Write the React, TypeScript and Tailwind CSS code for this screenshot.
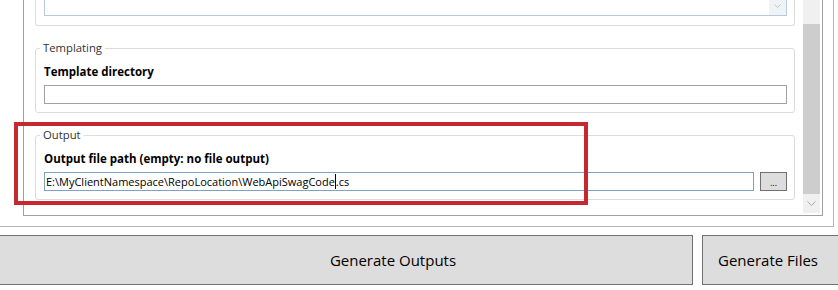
export default function App() {
  return (
    <div className="relative w-[838px] h-[290px] overflow-hidden bg-white text-black font-['Open_Sans','Noto_Sans',sans-serif]">
      {/* outer frame, left edge is off screen */}
      <div className="-ml-[10px] w-[844px] h-[227px] border-r border-b border-[#b4b4b4]">
        <div className="ml-[33px] w-[800px] h-[216px] flex border-l border-r border-b border-[#a0a0a0]">
          <div className="flex-1 pl-[11px] pr-[8px]">
            {/* previous group, scrolled so only its bottom shows */}
            <div className="border-x border-b border-[#dcdcdc] rounded-b-[3px] pl-[8px] pr-[7px] pb-[9px]">
              <div className="h-[16px] flex justify-end border-x border-b border-[#b9c9d9]">
                <div className="w-[17px] flex items-start justify-center bg-[#eef3f8] pt-[4px]">
                  <svg width="7" height="4" viewBox="0 0 7 4" fill="none" stroke="#c4c4c4" strokeWidth="1">
                    <path d="M0.5 0.5 L3.5 3.5 L6.5 0.5" />
                  </svg>
                </div>
              </div>
            </div>

            <fieldset className="mt-[14px] border border-[#dcdcdc] rounded-[3px] pl-[8px] pr-[7px] pt-[8px] pb-[8px]">
              <legend className="-ml-[4px] px-[3px] text-[11.3px] leading-[16px] text-[#333]">Templating</legend>
              <div className="text-[11.5px] leading-[16px] font-bold">Template directory</div>
              <div className="mt-[5px] h-[19px] border border-[#a0a0a0]" />
            </fieldset>

            <fieldset className="mt-[14px] border border-[#dcdcdc] rounded-[3px] pl-[8px] pr-[7px] pt-[8px] pb-[8px]">
              <legend className="-ml-[4px] px-[3px] text-[11.3px] leading-[16px] text-[#333]">Output</legend>
              <div className="text-[11.5px] leading-[16px] font-bold">Output file path (empty: no file output)</div>
              <div className="mt-[5px] flex gap-[6px]">
                <div className="flex-1 h-[19px] flex items-center border border-[#7ea2c2] pl-[1px] text-[11px] leading-[16px]">
                  <span>E:\MyClientNamespace\RepoLocation\WebApiSwagCode</span>
                  <span className="w-[1px] h-[15px] bg-black" />
                  <span>.cs</span>
                </div>
                <button className="w-[27px] h-[19px] flex items-end justify-center pb-[3px] bg-[#dddddd] border border-[#707070] text-[9px] leading-none">
                  ...
                </button>
              </div>
            </fieldset>
          </div>

          {/* vertical scrollbar */}
          <div className="w-[17px] h-[213px] mr-[2px] flex flex-col bg-[#f0f0f0]">
            <div className="h-[24px]" />
            <div className="h-[170px] bg-[#cdcdcd]" />
            <div className="flex-1 flex items-center justify-center">
              <svg width="9" height="5" viewBox="0 0 9 5" fill="none" stroke="#a6a6a6" strokeWidth="1">
                <path d="M0.5 0.5 L4.5 4.5 L8.5 0.5" />
              </svg>
            </div>
          </div>
        </div>
      </div>

      <div className="mt-[8px] flex gap-[9px]">
        <button className="-ml-[2px] w-[695px] h-[50px] shrink-0 flex items-center justify-center pl-[95px] bg-[#dddddd] border border-[#707070] text-[15px]">
          Generate Outputs
        </button>
        <button className="w-[140px] h-[50px] shrink-0 flex items-center justify-center pr-[8px] bg-[#dddddd] border border-[#707070] text-[15px]">
          Generate Files
        </button>
      </div>

      {/* red highlight drawn over the screenshot */}
      <div className="absolute left-[14px] top-[122px] w-[574px] h-[83px] border-4 border-[#c5282e]" />
    </div>
  );
}
